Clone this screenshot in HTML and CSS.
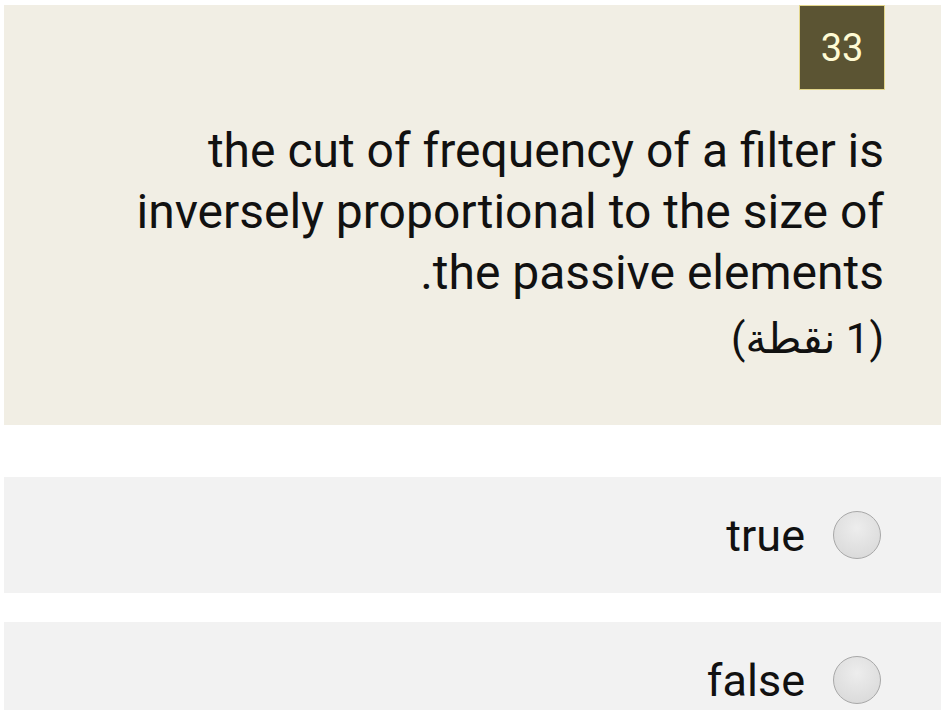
FILE: index.html
```html
<!DOCTYPE html>
<html lang="ar">
<head>
    <meta charset="UTF-8">
    <meta name="viewport" content="width=device-width, initial-scale=1.0">
    <title>Question 33</title>
    <link rel="stylesheet" href="styles.css">
</head>
<body>
    <div class="page" dir="rtl">
        <div class="question-card">
            <div class="question-head">
                <span class="question-number">33</span>
            </div>
            <p class="question-text">the cut of frequency of a filter is inversely proportional to the size of the passive elements.</p>
            <p class="question-points">(1 نقطة)</p>
        </div>

        <label class="option">
            <span class="radio"></span>
            <span class="option-label">true</span>
        </label>
        <label class="option">
            <span class="radio"></span>
            <span class="option-label">false</span>
        </label>
    </div>
</body>
</html>
```

FILE: styles.css
```css
body {
    margin: 0;
    padding: 0;
    background-color: #fff;
    font-family: Roboto, "DejaVu Sans", sans-serif;
    color: #111;
}
.page {
    padding: 5px 4px 0 4px;
}
.question-card {
    background-color: #f1eee4;
    padding: 0 57px 0 100px;
    height: 420px;
    box-sizing: border-box;
}
.question-head {
    display: flex;
    direction: ltr;
    justify-content: flex-end;
    margin-right: -1px;
}
.question-number {
    display: flex;
    align-items: center;
    justify-content: center;
    width: 86px;
    height: 85px;
    box-sizing: border-box;
    background-color: #5b5433;
    border: 1px solid #e3d68c;
    color: #fffbd4;
    font-size: 38px;
}
.question-text {
    margin: 30px 0 0 0;
    font-size: 48px;
    line-height: 61px;
}
.question-points {
    margin: 0;
    padding-top: 5px;
    font-size: 42px;
    line-height: 61px;
}
.option {
    display: flex;
    align-items: center;
    gap: 28px;
    height: 116px;
    margin-top: 52px;
    padding-right: 60px;
    background-color: #f2f2f2;
    font-size: 45px;
    cursor: pointer;
}
.option + .option {
    margin-top: 29px;
}
.radio {
    width: 48px;
    height: 48px;
    border-radius: 50%;
    border: 1px solid #a8a8a8;
    background: radial-gradient(circle at 50% 35%, #ededed, #d6d6d6);
    box-sizing: border-box;
}
```
